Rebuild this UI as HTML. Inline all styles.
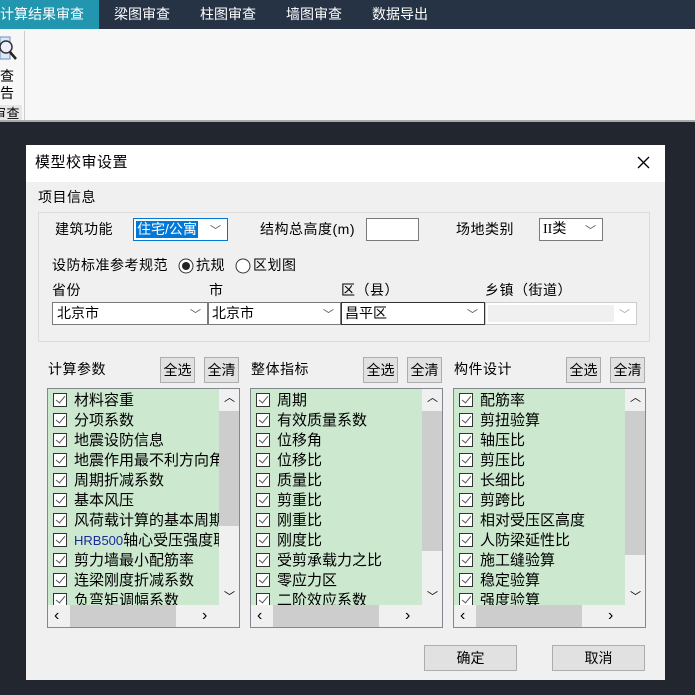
<!DOCTYPE html>
<html><head><meta charset="utf-8">
<style>
*{box-sizing:border-box;margin:0;padding:0}
body{width:695px;height:695px;overflow:hidden;background:#22272f;font-family:"Liberation Sans","Noto Sans CJK SC",sans-serif;font-size:14px;color:#000;position:relative}
.abs{position:absolute}
.top{left:0;top:0;width:695px;height:29px;background:#263345}
.tab{position:absolute;top:0;height:29px;line-height:29px;color:#fff;font-size:14px}
.ribbon{left:0;top:29px;width:695px;height:93px;background:#f7f7f7;border-bottom:2px solid #aaa}
.dlg{left:26px;top:145px;width:639px;height:535px;background:#f0f0f0}
.title{left:0;top:0;width:639px;height:37px;background:#fff}
.t{position:absolute;white-space:nowrap;line-height:16px;letter-spacing:0.5px}
.combo{position:absolute;background:#fff;border:1px solid #7a7a7a;height:23px}
.combo .v{position:absolute;right:6px;top:3px;font-size:11px;color:#555}
.btn{position:absolute;background:#e1e1e1;border:1px solid #adadad;text-align:center;line-height:24px}
.list{position:absolute;top:243px;width:193px;height:240px;background:#cce8cf;border:1px solid #828790;overflow:hidden}
.item{position:absolute;left:5px;height:20px;white-space:nowrap;font-size:15px;line-height:20px;margin-top:2px}
.cb{display:inline-block;width:14px;height:14px;border:1px solid #333;background:#fff;vertical-align:-2px;margin-right:7px;position:relative}
.cb:after{content:"";position:absolute;left:4px;top:0px;width:4px;height:8px;border-right:1.5px solid #555;border-bottom:1.5px solid #555;transform:rotate(40deg)}
.vs{position:absolute;right:0;top:0;width:20px;height:217px;background:#f0f0f0}
.hs{position:absolute;left:0;bottom:0;width:100%;height:22px;background:#f0f0f0}
.ar{position:absolute;font-size:16px;top:0;line-height:22px}
</style></head><body>
<div class="abs top">
 <div class="tab" style="left:0;width:99px;background:#2196ae">计算结果审查</div>
 <div class="tab" style="left:114px">梁图审查</div>
 <div class="tab" style="left:200px">柱图审查</div>
 <div class="tab" style="left:286px">墙图审查</div>
 <div class="tab" style="left:372px">数据导出</div>
</div>
<div class="abs ribbon">
 <svg class="abs" style="left:0;top:6px" width="18" height="30"><rect x="0" y="2" width="10" height="22" fill="#dde8f5" stroke="#6b8fc0"/><circle cx="6" cy="12" r="6" fill="#eef" stroke="#333" stroke-width="1.5"/><line x1="10" y1="17" x2="16" y2="24" stroke="#222" stroke-width="2.5"/></svg>
 <div class="t" style="left:0;top:39px">查</div>
 <div class="t" style="left:0;top:56px">告</div>
 <div class="abs" style="left:0;top:76px;width:22px;height:15px;background:#e6e6e6"></div>
 <div class="t" style="left:-7px;top:77px;font-size:13px">审查</div>
 <div class="abs" style="left:24px;top:2px;width:1px;height:89px;background:#ccc"></div>
</div>
<div class="abs dlg">
 <div class="abs title"></div>
 <div class="t" style="left:9px;top:10px;font-size:15px">模型校审设置</div>
 <svg class="abs" style="left:611px;top:11px" width="13" height="13"><path d="M1 1L12 12M12 1L1 12" stroke="#000" stroke-width="1.3"/></svg>
 <div class="t" style="left:12px;top:44px">项目信息</div>
 <div class="abs" style="left:12px;top:67px;width:612px;height:130px;border:1px solid #dcdcdc"></div>
 <div class="t" style="left:29px;top:76px">建筑功能</div>
 <div class="combo" style="left:107px;top:73px;width:95px;border-color:#0078d7"><span style="position:absolute;left:2px;top:2px;background:#0078d7;color:#fff;line-height:17px;padding:0 1px">住宅/公寓</span><span class="v">﹀</span></div>
 <div class="t" style="left:234px;top:76px">结构总高度(m)</div>
 <div class="combo" style="left:340px;top:73px;width:53px"></div>
 <div class="t" style="left:430px;top:76px">场地类别</div>
 <div class="combo" style="left:513px;top:73px;width:64px"><span style="position:absolute;left:3px;top:2px;line-height:17px;font-family:'Liberation Serif','Noto Sans CJK SC',serif">II类</span><span class="v">﹀</span></div>
 <div class="t" style="left:26px;top:112px">设防标准参考规范</div>
 <svg class="abs" style="left:152px;top:113px" width="16" height="16"><circle cx="8" cy="8" r="7" fill="#fff" stroke="#333"/><circle cx="8" cy="8" r="4" fill="#222"/></svg>
 <div class="t" style="left:170px;top:112px">抗规</div>
 <svg class="abs" style="left:209px;top:113px" width="16" height="16"><circle cx="8" cy="8" r="7" fill="#fff" stroke="#333"/></svg>
 <div class="t" style="left:227px;top:112px">区划图</div>
 <div class="t" style="left:26px;top:137px">省份</div>
 <div class="t" style="left:183px;top:137px">市</div>
 <div class="t" style="left:315px;top:137px">区（县）</div>
 <div class="t" style="left:459px;top:137px">乡镇（街道）</div>
 <div class="combo" style="left:26px;top:157px;width:156px"><span style="position:absolute;left:4px;top:2px;line-height:17px">北京市</span><span class="v">﹀</span></div>
 <div class="combo" style="left:182px;top:157px;width:133px"><span style="position:absolute;left:3px;top:2px;line-height:17px">北京市</span><span class="v">﹀</span></div>
 <div class="combo" style="left:315px;top:157px;width:144px;border-color:#333"><span style="position:absolute;left:3px;top:2px;line-height:17px">昌平区</span><span class="v">﹀</span></div>
 <div class="combo" style="left:459px;top:157px;width:152px;border-color:#ccc"><span style="position:absolute;left:2px;top:2px;width:126px;height:17px;background:#f0f0f0"></span><span class="v" style="color:#aaa">﹀</span></div>

 <div class="t" style="left:22px;top:216px">计算参数</div>
 <div class="btn" style="left:134px;top:212px;width:35px;height:26px">全选</div>
 <div class="btn" style="left:178px;top:212px;width:35px;height:26px">全清</div>
 <div class="t" style="left:225px;top:216px">整体指标</div>
 <div class="btn" style="left:337px;top:212px;width:35px;height:26px">全选</div>
 <div class="btn" style="left:381px;top:212px;width:35px;height:26px">全清</div>
 <div class="t" style="left:428px;top:216px">构件设计</div>
 <div class="btn" style="left:540px;top:212px;width:35px;height:26px">全选</div>
 <div class="btn" style="left:584px;top:212px;width:35px;height:26px">全清</div>

 <div class="list" style="left:21px">
  <div class="item" style="top:0"><span class="cb"></span>材料容重</div>
  <div class="item" style="top:20px"><span class="cb"></span>分项系数</div>
  <div class="item" style="top:40px"><span class="cb"></span>地震设防信息</div>
  <div class="item" style="top:60px"><span class="cb"></span>地震作用最不利方向角</div>
  <div class="item" style="top:80px"><span class="cb"></span>周期折减系数</div>
  <div class="item" style="top:100px"><span class="cb"></span>基本风压</div>
  <div class="item" style="top:120px"><span class="cb"></span>风荷载计算的基本周期</div>
  <div class="item" style="top:140px"><span class="cb"></span><span style="font-size:13px;color:#1a2a9a">HRB500</span>轴心受压强度取值</div>
  <div class="item" style="top:160px"><span class="cb"></span>剪力墙最小配筋率</div>
  <div class="item" style="top:180px"><span class="cb"></span>连梁刚度折减系数</div>
  <div class="item" style="top:200px"><span class="cb"></span>负弯矩调幅系数</div>
  <div class="vs"><div style="position:absolute;left:0;top:22px;width:20px;height:115px;background:#cdcdcd"></div><span style="position:absolute;left:5px;top:0;font-size:11px">︿</span><span style="position:absolute;left:5px;bottom:2px;font-size:11px">﹀</span></div>
  <div class="hs"><div style="position:absolute;left:22px;top:0;width:106px;height:22px;background:#cdcdcd"></div><span class="ar" style="left:6px">‹</span><span class="ar" style="left:154px">›</span></div>
 </div>
 <div class="list" style="left:224px">
  <div class="item" style="top:0"><span class="cb"></span>周期</div>
  <div class="item" style="top:20px"><span class="cb"></span>有效质量系数</div>
  <div class="item" style="top:40px"><span class="cb"></span>位移角</div>
  <div class="item" style="top:60px"><span class="cb"></span>位移比</div>
  <div class="item" style="top:80px"><span class="cb"></span>质量比</div>
  <div class="item" style="top:100px"><span class="cb"></span>剪重比</div>
  <div class="item" style="top:120px"><span class="cb"></span>刚重比</div>
  <div class="item" style="top:140px"><span class="cb"></span>刚度比</div>
  <div class="item" style="top:160px"><span class="cb"></span>受剪承载力之比</div>
  <div class="item" style="top:180px"><span class="cb"></span>零应力区</div>
  <div class="item" style="top:200px"><span class="cb"></span>二阶效应系数</div>
  <div class="vs"><div style="position:absolute;left:0;top:22px;width:20px;height:140px;background:#cdcdcd"></div><span style="position:absolute;left:5px;top:0;font-size:11px">︿</span><span style="position:absolute;left:5px;bottom:2px;font-size:11px">﹀</span></div>
  <div class="hs"><div style="position:absolute;left:22px;top:0;width:106px;height:22px;background:#cdcdcd"></div><span class="ar" style="left:6px">‹</span><span class="ar" style="left:154px">›</span></div>
 </div>
 <div class="list" style="left:427px">
  <div class="item" style="top:0"><span class="cb"></span>配筋率</div>
  <div class="item" style="top:20px"><span class="cb"></span>剪扭验算</div>
  <div class="item" style="top:40px"><span class="cb"></span>轴压比</div>
  <div class="item" style="top:60px"><span class="cb"></span>剪压比</div>
  <div class="item" style="top:80px"><span class="cb"></span>长细比</div>
  <div class="item" style="top:100px"><span class="cb"></span>剪跨比</div>
  <div class="item" style="top:120px"><span class="cb"></span>相对受压区高度</div>
  <div class="item" style="top:140px"><span class="cb"></span>人防梁延性比</div>
  <div class="item" style="top:160px"><span class="cb"></span>施工缝验算</div>
  <div class="item" style="top:180px"><span class="cb"></span>稳定验算</div>
  <div class="item" style="top:200px"><span class="cb"></span>强度验算</div>
  <div class="vs"><div style="position:absolute;left:0;top:22px;width:20px;height:144px;background:#cdcdcd"></div><span style="position:absolute;left:5px;top:0;font-size:11px">︿</span><span style="position:absolute;left:5px;bottom:2px;font-size:11px">﹀</span></div>
  <div class="hs"><div style="position:absolute;left:22px;top:0;width:106px;height:22px;background:#cdcdcd"></div><span class="ar" style="left:6px">‹</span><span class="ar" style="left:154px">›</span></div>
 </div>

 <div class="btn" style="left:398px;top:500px;width:93px;height:26px">确定</div>
 <div class="btn" style="left:526px;top:500px;width:93px;height:26px">取消</div>
</div>
</body></html>
